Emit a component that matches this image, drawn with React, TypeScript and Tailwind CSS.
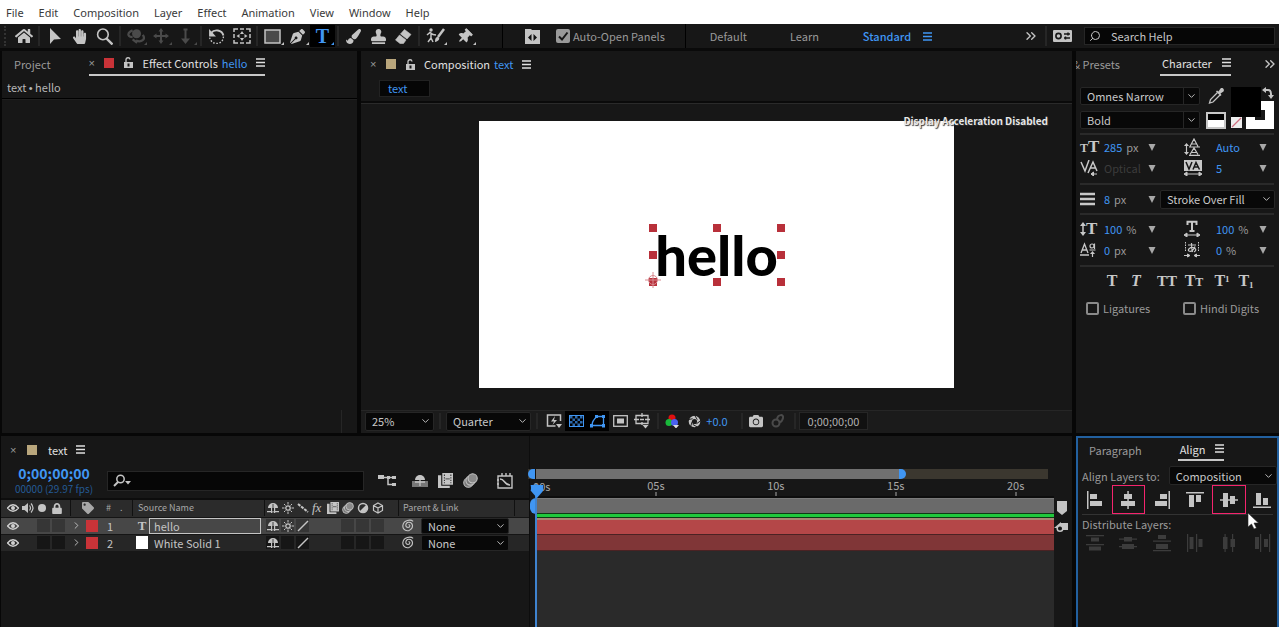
import { useState } from "react";
import type { ReactNode } from "react";
import clsx from "clsx";
import { ChevronDown, ChevronRight, ChevronsRight, Search } from "lucide-react";
import { FaCamera, FaHandPaper, FaHome, FaLock, FaPaintBrush, FaPenNib, FaStamp, FaTag, FaThumbtack } from "react-icons/fa";

const MENUS = ["File", "Edit", "Composition", "Layer", "Effect", "Animation", "View", "Window", "Help"];

const DURATION = 21.6;
const TICKS = [5, 10, 15, 20];

const SERIF = "font-['Liberation_Serif',serif] font-bold";

type IconProps = { className?: string; children: ReactNode; box?: string };

function Icon({ className, children, box = "0 0 16 16" }: IconProps) {
  return (
    <svg
      viewBox={box}
      fill="none"
      stroke="currentColor"
      strokeWidth="1.5"
      className={clsx("shrink-0", className || "w-4 h-4")}
      aria-hidden="true"
    >
      {children}
    </svg>
  );
}

function MenuIcon({ className }: { className?: string }) {
  return (
    <button aria-label="Panel menu" className={clsx("w-[9px] shrink-0", className)}>
      <Icon box="0 0 9 9" className="w-[9px] h-[9px]">
        <path d="M0 1h9M0 4.500h9M0 8h9" strokeWidth="1.300" />
      </Icon>
    </button>
  );
}

function CloseTab({ className }: { className: string }) {
  return (
    <button
      aria-label="Close tab"
      className={clsx("text-left text-[11px] text-[#9a9a9a] font-['Liberation_Sans',sans-serif]", className)}
    >
      ×
    </button>
  );
}

type ToolProps = {
  label: string;
  children: ReactNode;
  more?: boolean;
  active?: boolean;
  dim?: boolean;
  small?: boolean;
  className?: string;
};

function Tool({ label, children, more, active, dim, small, className }: ToolProps) {
  return (
    <button
      aria-label={label}
      className={clsx(
        "relative shrink-0 flex items-center justify-center",
        small ? "w-[22px] h-5" : "w-[25px] h-[22px]",
        active ? "bg-black text-[#4096f3]" : dim ? "text-[#4a4a4a]" : "text-[#c4c4c4]",
        className
      )}
    >
      {children}
      {more && (
        <Icon box="0 0 4 4" className="absolute right-px bottom-[2px] w-[3px] h-[3px]">
          <path d="M4 0v4H0z" fill="currentColor" stroke="none" />
        </Icon>
      )}
    </button>
  );
}

function Sep({ className }: { className?: string }) {
  return (
    <div className={clsx("w-[6px] shrink-0 flex justify-center", className || "h-5")}>
      <div className="w-[2px] bg-[#262626]" />
    </div>
  );
}

type SelectProps = { label: string; options: string[]; className?: string; split?: boolean };

function Select({ label, options, className, split }: SelectProps) {
  return (
    <div className={clsx("relative text-[#c8c8c8]", className)}>
      <select
        aria-label={label}
        className="appearance-none w-full h-full block bg-[#080808] border border-[#262626] rounded-xs pl-[6px] pr-4 leading-[14px]"
      >
        {options.map((o) => (
          <option key={o}>{o}</option>
        ))}
      </select>
      {split && <div className="absolute right-4 top-0 h-full w-px bg-[#262626]" />}
      <ChevronDown className="absolute right-[3px] top-1/2 -translate-y-1/2 w-[11px] h-[11px] pointer-events-none" />
    </div>
  );
}

/* ---------- toolbar ---------- */

function Toolbar() {
  const [autoOpen, setAutoOpen] = useState(true);
  return (
    <div className="h-[27px] shrink-0 flex items-center bg-[#171717] border-b-[3px] border-[#0a0a0a] text-[#9a9a9a] pl-1 pr-1">
      <div className="w-[7px] h-5 shrink-0 border-l-2 border-dotted border-[#333]" />
      <Tool label="Home"><FaHome className="w-[18px] h-[18px]" /></Tool>
      <Sep />
      <Tool label="Selection">
        <Icon>
          <path d="M3 0v16l4-4.500 7-.5z" fill="currentColor" stroke="none" />
        </Icon>
      </Tool>
      <Tool label="Hand"><FaHandPaper className="w-[15px] h-[15px]" /></Tool>
      <Tool label="Zoom">
        <Icon className="w-[17px] h-[17px]">
          <circle cx="6.500" cy="6" r="5" />
          <path d="M10 10l5.500 5.500" strokeWidth="2.200" />
        </Icon>
      </Tool>
      <Sep />
      <Tool label="Orbit camera" dim more>
        <Icon className="w-[18px] h-[18px]">
          <path d="M5 9C1 9 0 6 3 4l2-1M8 12c5 2 9-1 6-5M5 11l4 3" strokeWidth="2" />
          <circle cx="8.500" cy="6" r="4" fill="currentColor" stroke="none" />
        </Icon>
      </Tool>
      <Tool label="Pan camera" dim more>
        <Icon>
          <path d="M8 2v12M2 8h12" strokeWidth="2" />
          <path d="M8 0l2.500 3.500h-5zM8 16l2.500-3.500h-5zM0 8l3.500-2.500v5zM16 8l-3.500-2.500v5z" fill="currentColor" stroke="none" />
        </Icon>
      </Tool>
      <Tool label="Dolly camera" dim more>
        <Icon>
          <path d="M7.500 1v12M5.500 1.500h4" strokeWidth="2" />
          <path d="M7.500 16l4.500-5.500h-9z" fill="currentColor" stroke="none" />
        </Icon>
      </Tool>
      <Sep />
      <Tool label="Rotation">
        <Icon className="w-[17px] h-[17px]">
          <path d="M3 4.500C6 1 13 1.500 14.500 7" strokeWidth="1.800" />
          <path d="M14.500 8c0 8-11 9-13 1" strokeDasharray="1.500 1.500" strokeWidth="1.300" />
          <path d="M1 1v7h6.500z" fill="currentColor" stroke="none" />
        </Icon>
      </Tool>
      <Tool label="Pan behind">
        <Icon className="w-[18px] h-[16px]" box="0 0 18 16">
          <path d="M1 4V1h4M7 1h4M13 1h4v3M17 6v4M17 12v3h-4M11 15H7M5 15H1v-3M1 10V6" />
          <path d="M9 3l2 3H7zM9 13l2-3H7zM3.500 8l3-2v4zM14.500 8l-3-2v4z" fill="currentColor" stroke="none" />
        </Icon>
      </Tool>
      <Sep />
      <Tool label="Rectangle" more>
        <Icon className="w-[17px] h-[15px]" box="0 0 17 15">
          <rect x="1" y="1" width="15" height="13" fill="#4a4a4a" />
        </Icon>
      </Tool>
      <Tool label="Pen" more><FaPenNib className="w-[15px] h-[15px]" /></Tool>
      <Tool label="Type" active more>
        <span className={clsx(SERIF, "text-[20px] leading-5")}>T</span>
      </Tool>
      <Sep />
      <Tool label="Brush"><FaPaintBrush className="w-[15px] h-[15px]" /></Tool>
      <Tool label="Clone stamp"><FaStamp className="w-[15px] h-[15px]" /></Tool>
      <Tool label="Eraser">
        <Icon className="w-[17px] h-[17px]" box="0 0 17 17">
          <path d="M9.500 1.500l6.500 5-4 4.500-6.500-5zM4.500 7l6.500 5-2.500 3.500H5L.5 12z" fill="currentColor" stroke="currentColor" strokeWidth=".6" strokeLinejoin="round" />
        </Icon>
      </Tool>
      <Sep />
      <Tool label="Roto brush" more className="ml-px">
        <Icon className="w-[19px] h-[16px]" box="0 0 19 16">
          <circle cx="5" cy="2" r="1.700" fill="currentColor" stroke="none" />
          <path d="M1 7l3-2.500 3 2 3 .5M5 6v4l-3 4M5 10l2 4" />
          <path d="M18 1l-6 8" strokeWidth="2.500" />
          <path d="M9 14c0-4 1-5 3-5s2 4-3 5z" fill="currentColor" stroke="none" />
        </Icon>
      </Tool>
      <Tool label="Puppet pin" more className="ml-1"><FaThumbtack className="w-[15px] h-[15px] rotate-45" /></Tool>
      <div className="w-px h-6 ml-[25px] bg-black" />
      <button aria-label="Snapping" className="ml-[22px] text-[#c4c4c4]">
        <Icon className="w-[15px] h-[15px]" box="0 0 15 15">
          <path d="M0 0h6l1 1h8v14H0z" fill="currentColor" stroke="none" />
          <path d="M6.500 5L3 8.500 6.500 12zM8.500 5L12 8.500 8.500 12z" fill="#111" stroke="none" />
        </Icon>
      </button>
      <label className="ml-4 flex items-center gap-[3px]">
        <span className="relative w-[14px] h-[14px] block">
          <input
            type="checkbox"
            checked={autoOpen}
            onChange={(e) => setAutoOpen(e.target.checked)}
            className="appearance-none block w-[14px] h-[14px] rounded-xs bg-[#9a9a9a]"
          />
          {autoOpen && (
            <Icon box="0 0 14 14" className="absolute inset-0 w-[14px] h-[14px] text-[#171717] pointer-events-none">
              <path d="M3 7.500l3 3 5.500-7" strokeWidth="2" />
            </Icon>
          )}
        </span>
        Auto-Open Panels
      </label>
      <div className="w-px h-6 ml-5 bg-black" />
      <button className="ml-6">Default</button>
      <button className="ml-[43px]">Learn</button>
      <button className="ml-11 text-[#4096f3] font-medium">Standard</button>
      <MenuIcon className="ml-3 text-[#4096f3]" />
      <ChevronsRight className="ml-auto w-4 h-4 text-[#c4c4c4]" />
      <Sep className="h-5 ml-1" />
      <button aria-label="Workspace settings" className="ml-1 text-[#c4c4c4]">
        <Icon box="0 0 19 12" className="w-[19px] h-3">
          <rect width="19" height="12" rx="1" fill="currentColor" stroke="none" />
          <circle cx="5.500" cy="6" r="2.600" stroke="#171717" strokeWidth="1.600" />
          <path d="M11 4h6M11 8h6" stroke="#171717" />
          <path d="M15 2.500v3M12.500 6.500v3" stroke="#171717" />
        </Icon>
      </button>
      <div className="ml-3 w-[191px] h-[18px] flex items-center bg-[#060606] border border-[#262626] pl-1 gap-[10px]">
        <Search className="w-3 h-3 -scale-x-100 text-[#c4c4c4]" />
        <input
          aria-label="Search Help"
          placeholder="Search Help"
          className="flex-1 min-w-0 bg-transparent outline-none placeholder:text-[#c4c4c4]"
        />
      </div>
    </div>
  );
}

/* ---------- upper panels ---------- */

function Unlock() {
  return (
    <Icon box="0 0 9 11" className="w-[9px] h-[11px] text-[#c4c4c4]">
      <path d="M2 5V3a2 2 0 0 1 4-.5" strokeWidth="1.300" />
      <path d="M0 5h9v6H0zM3.500 6.500v3h2v-3z" fill="currentColor" fillRule="evenodd" stroke="none" />
    </Icon>
  );
}

function EffectControls() {
  return (
    <section className="w-[355px] shrink-0 flex flex-col bg-[#171717]">
      <div className="h-[25px] flex items-stretch pl-3 text-[#9a9a9a]">
        <button>Project</button>
        <div className="ml-[38px] flex items-center border-b-2 border-[#c8c8c8] text-[#e0e0e0]">
          <CloseTab className="w-[15px]" />
          <span className="w-[10px] h-[10px] bg-[#c93338]" />
          <span className="mx-[10px]"><Unlock /></span>
          Effect Controls
          <span className="ml-1 text-[#4096f3]">hello</span>
          <MenuIcon className="ml-[9px]" />
        </div>
      </div>
      <p className="h-[23px] leading-[23px] pl-[5px] border-b border-black text-[#b8b8b8]">
        text <span className="font-['Liberation_Sans',sans-serif]">•</span> hello
      </p>
      <div className="flex-1 border-t border-[#1f1f1f]" />
      <div className="h-[23px] mr-[15px] border-r border-[#262626]" />
    </section>
  );
}

const HANDLES = [
  "left-0 top-0",
  "left-1/2 top-0",
  "left-full top-0",
  "left-0 top-1/2",
  "left-full top-1/2",
  "left-0 top-full",
  "left-1/2 top-full",
  "left-full top-full",
];

function Viewer() {
  return (
    <div className="relative flex-1 flex items-start justify-center pt-[17px] border-t border-[#2a2a2a]">
      <div className="w-[68%] max-w-[475px] aspect-[475/267] bg-white flex items-center justify-center">
        <div className="relative w-32 h-[54px] flex items-center justify-center">
          <span className="font-['Lato',sans-serif] font-black text-[56px] leading-none text-black">hello</span>
          {HANDLES.map((pos) => (
            <span key={pos} className={clsx("absolute w-2 h-2 -ml-1 -mt-1 bg-[#b8303a]", pos)} />
          ))}
          <Icon box="0 0 16 16" className="absolute -left-2 top-[44px] w-4 h-4 text-[#d88a90]">
            <circle cx="8" cy="8" r="4.500" strokeWidth="1" />
            <path d="M8 0v16M0 8h16" strokeWidth="1" />
          </Icon>
        </div>
      </div>
      <p className="absolute right-6 top-[9px] leading-4 text-[10px] font-bold text-[#e8e8e8] [text-shadow:1px_1px_1px_#333]">
        Display Acceleration Disabled
      </p>
    </div>
  );
}

function ViewerFooter() {
  return (
    <div className="h-[23px] flex items-center bg-[#1b1b1b] border-t border-[#262626] pl-1 pb-[2px] text-[#c4c4c4]">
      <Select label="Magnification" options={["25%", "50%", "100%"]} className="w-[69px] h-[19px]" />
      <Sep className="mx-[3px] h-4" />
      <Select label="Resolution" options={["Quarter", "Half", "Full"]} className="w-[85px] h-[19px]" />
      <Sep className="mx-[3px] h-4" />
      <div className="flex items-center">
        <Tool label="Fast previews" small>
          <Icon>
            <path d="M14.500 8V2h-13v11h8" />
            <path d="M9 3L5 8.500h3L6.500 12 11 7H8z" fill="currentColor" stroke="none" />
            <path d="M10 11h6l-3 4z" fill="currentColor" stroke="none" />
          </Icon>
        </Tool>
        <Tool label="Transparency grid" small active>
          <Icon box="0 0 15 12" className="w-[15px] h-3">
            <rect x=".5" y=".5" width="14" height="11" strokeWidth="1" />
            <path
              d="M1 1h2.500v2.500H1zM6 1h2.500v2.500H6zM11 1h2.500v2.500H11zM3.500 3.500H6V6H3.500zM8.500 3.500H11V6H8.500zM1 6h2.500v2.500H1zM6 6h2.500v2.500H6zM11 6h2.500v2.500H11zM3.500 8.500H6V11H3.500zM8.500 8.500H11V11H8.500z"
              fill="currentColor"
              opacity=".7"
              stroke="none"
            />
          </Icon>
        </Tool>
        <Tool label="Mask visibility" small active>
          <Icon>
            <path d="M2 12.500C2 8 4 6 7 3.500l6.500 0V12.500z" strokeWidth="1.300" />
            <path d="M0 11h3v3.500H0zM5 2h3v3H5zM12 2h3v3h-3zM12 11h3v3.500h-3z" fill="currentColor" stroke="none" />
          </Icon>
        </Tool>
        <Tool label="Region of interest" small>
          <Icon box="0 0 15 12" className="w-[15px] h-3">
            <rect x=".7" y=".7" width="13.600" height="10.600" strokeWidth="1.300" />
            <rect x="4" y="3.500" width="7" height="5" fill="currentColor" stroke="none" />
          </Icon>
        </Tool>
        <Tool label="Grid and guides" small>
          <Icon>
            <path d="M2 2.500h12v8H2zM0 6.500h5M11 6.500h5M8 0v4M8 9v3M6 6.500h4" strokeWidth="1.300" />
            <path d="M8.500 12h6l-3 3.500z" fill="currentColor" stroke="none" />
          </Icon>
        </Tool>
      </div>
      <Sep className="ml-[2px] h-4" />
      <Tool label="Channels" small>
        <svg viewBox="0 0 14 14" className="w-[14px] h-[14px]">
          <circle cx="7" cy="4" r="3.500" fill="#e01010" />
          <circle cx="4" cy="8.500" r="3.500" fill="#19b83a" />
          <circle cx="9.500" cy="8.500" r="3.500" fill="#4a62f0" />
          <path d="M8 11h6l-3 3.500z" fill="#ddd" />
        </svg>
      </Tool>
      <Tool label="Reset exposure" small>
        <Icon box="0 0 14 14" className="w-[13px] h-[13px]">
          <circle cx="7" cy="7" r="4.500" strokeWidth="3.500" />
          <path d="M7 0l3 5M14 6l-5 3.500M10 13l-5-3M3 12l1.500-5M0 5l5-1" stroke="#171717" strokeWidth="1" />
        </Icon>
      </Tool>
      <button className="w-6 whitespace-nowrap text-[#4096f3]">+0.0</button>
      <Sep className="ml-[10px] h-4" />
      <Tool label="Snapshot" small><FaCamera className="w-[14px] h-[14px]" /></Tool>
      <Tool label="Show snapshot" dim small>
        <Icon>
          <circle cx="6" cy="10" r="3.500" strokeWidth="2" />
          <path d="M7 6c1-5 7-5 6-1s-3 4-3 4" strokeWidth="2" />
        </Icon>
      </Tool>
      <Sep className="ml-[3px] h-4" />
      <button className="ml-px w-[69px] h-[18px] border border-[#262626] bg-[#111] leading-4 text-[#b0b0b0]">
        0;00;00;00
      </button>
    </div>
  );
}

function Composition() {
  return (
    <section className="flex-1 min-w-0 flex flex-col bg-[#171717]">
      <div className="h-[26px] flex items-center pl-[9px] text-[#e0e0e0]">
        <CloseTab className="w-4" />
        <span className="w-[10px] h-[10px] bg-[#b9a67c]" />
        <span className="ml-[10px] mr-[9px]"><Unlock /></span>
        Composition
        <span className="ml-1 text-[#4096f3]">text</span>
        <MenuIcon className="ml-[9px]" />
      </div>
      <div className="h-[26px] pt-[3px] pl-[18px] border-b-2 border-[#0a0a0a]">
        <button className="block w-[51px] h-[17px] bg-[#060606] border border-[#222] pl-2 text-left leading-[15px] text-[#4096f3]">
          text
        </button>
      </div>
      <Viewer />
      <ViewerFooter />
    </section>
  );
}

/* ---------- character panel ---------- */

type MetricProps = {
  label: string;
  icon: ReactNode;
  value: string;
  unit?: string;
  muted?: boolean;
  wide?: boolean;
};

function Metric({ label, icon, value, unit, muted, wide }: MetricProps) {
  return (
    <div className="flex items-center h-[21px]">
      <span className={clsx("flex justify-start shrink-0 text-[#c8c8c8]", wide ? "w-8" : "w-6")}>{icon}</span>
      <button aria-label={label} className={muted ? "text-[#3c3c3c]" : "text-[#4096f3]"}>
        {value}
      </button>
      {unit && <span className="ml-1 text-[#9a9a9a]">{unit}</span>}
      <Icon box="0 0 8 8" className="ml-auto w-2 h-2 text-[#a8a8a8]">
        <path d="M.5 1h7L4 8z" fill="currentColor" stroke="none" />
      </Icon>
    </div>
  );
}

function Rule() {
  return <div className="h-[2px] ml-1 mr-[5px] bg-[#2a2a2a]" />;
}

function Character() {
  return (
    <section className="flex-1 min-w-0 flex flex-col bg-[#171717]">
      <div className="h-[25px] flex items-stretch pr-px text-[#9a9a9a]">
        <button className="w-11 overflow-hidden flex items-center justify-end whitespace-nowrap">Effects &amp; Presets</button>
        <div className="ml-10 flex items-center border-b-2 border-[#c8c8c8] text-[#e0e0e0]">
          <span className="px-[2px]">Character</span>
          <MenuIcon className="ml-2" />
        </div>
        <ChevronsRight className="ml-auto self-center w-4 h-4 text-[#c4c4c4]" />
      </div>
      <div className="flex pl-1 pt-[11px] pb-1">
        <div className="flex flex-col gap-[6px]">
          <Select label="Font family" options={["Omnes Narrow"]} className="w-[120px] h-[18px]" split />
          <Select label="Font style" options={["Bold", "Regular"]} className="w-[120px] h-[18px]" split />
        </div>
        <div className="ml-[6px] flex flex-col items-center justify-between w-5">
          <button aria-label="Eyedropper" className="text-[#c4c4c4]">
            <Icon box="0 0 17 17" className="w-[17px] h-[18px]">
              <path d="M9.500 5L2.500 12l-1 3.500L5 14.500l7-7" strokeWidth="1.300" />
              <path d="M8 4l1-1 1.500 1 2-3c2-1.500 4.500 1 3 3l-3 2 1 1.500-1 1z" fill="currentColor" stroke="none" />
            </Icon>
          </button>
          <button aria-label="Default colours" className="w-5 h-[17px] border-2 border-[#c8c8c8] bg-black flex items-end">
            <span className="w-full h-[7px] bg-white" />
          </button>
        </div>
        <div className="relative ml-[5px] w-[43px] h-[42px]">
          <button aria-label="Stroke colour" className="absolute right-0 bottom-0 w-7 h-7 border-[9px] border-white bg-[#171717]" />
          <button aria-label="Fill colour" className="absolute left-0 top-0 w-[30px] h-[30px] bg-black" />
          <button aria-label="No colour" className="absolute left-0 bottom-px w-[11px] h-[11px] bg-[#eee]">
            <Icon box="0 0 11 11" className="w-[11px] h-[11px] text-[#d07080]">
              <path d="M1 10L10 1" strokeWidth="1.200" />
            </Icon>
          </button>
          <Icon box="0 0 12 12" className="absolute right-0 top-0 w-3 h-3 text-[#c4c4c4]">
            <path d="M3 3h3q3 0 3 4v1" strokeWidth="2" />
            <path d="M0 3l4-3v6zM9 12L6 8h6z" fill="currentColor" stroke="none" />
          </Icon>
        </div>
      </div>
      <Rule />
      <div className="grid grid-cols-[76px_83px] gap-x-7 pl-1 pt-px pb-[5px]">
        <Metric
          label="Font size"
          value="285"
          unit="px"
          icon={
            <span className={clsx(SERIF, "leading-none text-[12px]")}>
              T<span className="text-[17px]">T</span>
            </span>
          }
        />
        <Metric
          wide
          label="Leading"
          value="Auto"
          icon={
            <Icon box="0 0 16 18" className="w-4 h-[18px]">
              <path d="M2.500 7v8M6 8.500L10 1l4 7.500M7.500 6h5M5 9h11M6 16.500l4-6.500 4 6.500M7.500 14.500h5M5 17.300h11" strokeWidth="1.200" />
              <path d="M0 8l2.500-3L5 8zM0 14l2.500 3L5 14z" fill="currentColor" stroke="none" />
            </Icon>
          }
        />
        <Metric
          label="Kerning"
          value="Optical"
          muted
          icon={
            <Icon box="0 0 18 16" className="w-[18px] h-4">
              <path d="M1 2l4 9 4-11M8 13l5-11 4 9M10.500 8h5" />
              <path d="M11 14h6M11 14l2.500-2v4z" fill="currentColor" strokeWidth="1" />
            </Icon>
          }
        />
        <Metric
          wide
          label="Tracking"
          value="5"
          icon={
            <Icon box="0 0 18 16" className="w-[18px] h-4">
              <path d="M0 0h18v11H0z" fill="currentColor" stroke="none" />
              <path d="M2 2l3 7 3-7M9 9.500l3-7 3.500 7M10.500 7h4" stroke="#171717" />
              <path d="M2 14h14M0 14l3-2v4zM18 14l-3-2v4z" fill="currentColor" strokeWidth="1" />
            </Icon>
          }
        />
      </div>
      <Rule />
      <div className="flex items-center pl-1 pr-1 h-7 gap-1">
        <div className="w-[76px]">
          <Metric
            label="Stroke width"
            value="8"
            unit="px"
            icon={
              <Icon className="w-[15px] h-[14px]" box="0 0 15 14">
                <path d="M0 2h15M0 7h15M0 12h15" strokeWidth="2.500" />
              </Icon>
            }
          />
        </div>
        <Select label="Stroke order" options={["Stroke Over Fill", "Fill Over Stroke"]} className="flex-1 h-[19px]" />
      </div>
      <Rule />
      <div className="grid grid-cols-[76px_83px] gap-x-7 pl-1 pt-[3px] pb-[5px]">
        <Metric
          label="Vertical scale"
          value="100"
          unit="%"
          icon={
            <span className={clsx(SERIF, "flex items-center text-[17px] leading-none")}>
              <Icon box="0 0 6 16" className="w-[6px] h-4">
                <path d="M3 3v10" />
                <path d="M0 5l3-4 3 4zM0 11l3 4 3-4z" fill="currentColor" stroke="none" />
              </Icon>
              T
            </span>
          }
        />
        <Metric
          wide
          label="Horizontal scale"
          value="100"
          unit="%"
          icon={
            <Icon box="0 0 16 17" className="w-4 h-[17px]">
              <path d="M3.500 5V1.800h9V5M8 2v9M5.500 11h5" strokeWidth="2" />
              <path d="M2 15h12M0 15l3-2v4zM16 15l-3-2v4z" fill="currentColor" strokeWidth="1" />
            </Icon>
          }
        />
        <Metric
          label="Baseline shift"
          value="0"
          unit="px"
          icon={
            <Icon box="0 0 16 15" className="w-4 h-[15px]">
              <path d="M1 11l3.500-9L8 11M2.500 8h4.500M0 13h9" strokeWidth="1.300" />
              <circle cx="12" cy="4" r="2" strokeWidth="1.200" />
              <path d="M14.500 1.500v5.500M9.500 8h6M12.500 11v4" strokeWidth="1.200" />
              <path d="M10 12l2.500-3L15 12z" fill="currentColor" stroke="none" />
            </Icon>
          }
        />
        <Metric
          wide
          label="Tsume"
          value="0"
          unit="%"
          icon={
            <Icon box="0 0 16 16" className="w-4 h-4">
              <path d="M1.500 0v10M14.500 0v10" strokeDasharray="1.500 1" strokeWidth="1" />
              <path d="M4 3h8M7.500 1c0 4 0 6 1 9M11 4.500C10 8 7 10 5 9s1-4 4-3.500 4 3 1 4.500" strokeWidth="1.200" />
              <path d="M0 13.500h5M16 13.500h-5M6 13.500L3.500 12v3zM10 13.500l2.500-1.500v3z" fill="currentColor" strokeWidth="1" />
            </Icon>
          }
        />
      </div>
      <Rule />
      <div className={clsx("h-7 flex items-center pl-6 text-[#c8c8c8] text-[16px] leading-none", SERIF)}>
        <button aria-label="Faux bold" className="w-6">T</button>
        <button aria-label="Faux italic" className="w-6 italic">T</button>
        <button aria-label="All caps" className="w-[30px] ml-1 text-[15px]">TT</button>
        <button aria-label="Small caps" className="w-6">T<span className="text-[12px]">T</span></button>
        <button aria-label="Superscript" className="w-6 ml-1">T<sup className="text-[9px]">1</sup></button>
        <button aria-label="Subscript" className="w-6">T<sub className="text-[9px]">1</sub></button>
      </div>
      <div className="h-[26px] flex items-center pl-[10px] text-[#9a9a9a]">
        <label className="w-[97px] flex items-center gap-1">
          <input type="checkbox" className="appearance-none w-[13px] h-[13px] border-2 border-[#8a8a8a] rounded-xs" />
          Ligatures
        </label>
        <label className="flex items-center gap-1">
          <input type="checkbox" className="appearance-none w-[13px] h-[13px] border-2 border-[#8a8a8a] rounded-xs" />
          Hindi Digits
        </label>
      </div>
    </section>
  );
}

/* ---------- align panel ---------- */

const ALIGN = [
  { label: "Align left", d: "M1 0h1.500v18H1zM4 3h7v5H4zM4 10h12v5H4z" },
  { label: "Align horizontal centre", d: "M8.300 0h1.500v18H8.300zM5 3h8v5H5zM2 10h14v5H2z", hot: true },
  { label: "Align right", d: "M15.500 0H17v18h-1.500zM7 3h7v5H7zM2 10h12v5H2z" },
  { label: "Align top", d: "M0 1h18v1.500H0zM3 4h5v12H3zM10 4h5v7h-5z" },
  { label: "Align vertical centre", d: "M0 8.300h18v1.500H0zM3 2h5v14H3zM10 5h5v8h-5z", hot: true },
  { label: "Align bottom", d: "M0 15.500h18V17H0zM3 2h5v12H3zM10 7h5v7h-5z" },
];

const DISTRIBUTE = [
  { label: "Distribute top", d: "M0 1h18v1.200H0zM5 3.500h8v4H5zM0 10h18v1.200H0zM3 12.500h12v4H3z" },
  { label: "Distribute vertical centre", d: "M0 4.500h18v1.200H0zM5 3h8v4.500H5zM0 12h18v1.200H0zM3 10h12v5H3z" },
  { label: "Distribute bottom", d: "M5 1h8v4H5zM0 6.500h18v1.200H0zM3 10h12v5H3zM0 16h18v1.200H0z" },
  { label: "Distribute left", d: "M1 0h1.200v18H1zM3.500 3h4v12h-4zM10 0h1.200v18H10zM12.500 5h4v8h-4z" },
  { label: "Distribute horizontal centre", d: "M4.500 0h1.200v18H4.500zM3 3h4.500v12H3zM12 0h1.200v18H12zM10.500 5H15v8h-4.500z" },
  { label: "Distribute right", d: "M7 0h1.200v18H7zM2 3h4v12H2zM16 0h1.200v18H16zM11 5h4v8h-4z" },
];

function Align() {
  return (
    <section className="relative h-[191px] shrink-0 bg-[#171717] border-2 border-[#22609f] border-b-0 text-[#9a9a9a]">
      <div className="h-[23px] flex items-stretch pl-[11px]">
        <button>Paragraph</button>
        <div className="ml-9 flex items-center border-b-2 border-[#c8c8c8] text-[#e0e0e0]">
          <span className="px-[2px]">Align</span>
          <MenuIcon className="ml-2" />
        </div>
      </div>
      <div className="flex items-center pl-1 pt-[5px] gap-[9px]">
        <span className="whitespace-nowrap">Align Layers to:</span>
        <Select label="Align layers to" options={["Composition", "Selection"]} className="flex-1 h-[19px]" />
      </div>
      <div className="grid grid-cols-6 h-[29px] -mr-[2px] text-[#c4c4c4]">
        {ALIGN.map((a) => (
          <button
            key={a.label}
            aria-label={a.label}
            className={clsx("flex items-center justify-center", a.hot && "border border-[#f5246e]")}
          >
            <Icon box="0 0 18 18" className="w-[18px] h-[18px]">
              <path d={a.d} fill="currentColor" stroke="none" />
            </Icon>
          </button>
        ))}
      </div>
      <div className="mx-1 h-px bg-[#333]" />
      <p className="pl-1 h-[18px] leading-[18px]">Distribute Layers:</p>
      <div className="grid grid-cols-6 h-5 -mr-[2px] text-[#3c3c3c]">
        {DISTRIBUTE.map((a) => (
          <button key={a.label} aria-label={a.label} disabled className="flex items-center justify-center">
            <Icon box="0 0 18 18" className="w-[18px] h-[18px]">
              <path d={a.d} fill="currentColor" stroke="none" />
            </Icon>
          </button>
        ))}
      </div>
      <svg viewBox="0 0 12 18" className="absolute right-[18px] top-[74px] w-3 h-[18px]">
        <path d="M1 1v14l3.500-3 2.500 5 2.500-1-2.500-5h4.500z" fill="#fff" stroke="#222" strokeWidth=".6" />
      </svg>
    </section>
  );
}

/* ---------- timeline ---------- */

function Eye() {
  return (
    <Icon box="0 0 12 8" className="w-3 h-2 text-[#d0d0d0]">
      <path d="M.5 4Q6-2.500 11.500 4 6 10.500.5 4z" strokeWidth="1.300" />
      <circle cx="6" cy="4" r="2" fill="currentColor" stroke="none" />
    </Icon>
  );
}

function Shy() {
  return (
    <Icon box="0 0 12 12" className="w-3 h-3">
      <path d="M1 6a5 5 0 0 1 10 0zM0 9h12v1.200H0zM4 6h1.200v5H4zM7 6h1.200v5H7z" fill="currentColor" stroke="none" />
      <path d="M6 2v8" stroke="#222" strokeWidth=".8" />
    </Icon>
  );
}

function Sun() {
  return (
    <Icon box="0 0 12 12" className="w-3 h-3">
      <circle cx="6" cy="6" r="2.200" strokeWidth="1.300" />
      <path d="M6 0v2.500M6 9.500V12M0 6h2.500M9.500 6H12M2 2l1.500 1.500M8.500 8.500L10 10M10 2L8.500 3.500M2 10l1.500-1.500" strokeWidth="1" />
    </Icon>
  );
}

function Frames({ className }: { className?: string }) {
  return (
    <Icon box="0 0 14 14" className={className}>
      <path d="M4 0h10v11H4zM0 2h3v10h8v2H0z" fill="currentColor" stroke="none" />
      <path d="M6 1.500v8M12 1.500v8" strokeDasharray="1.200 1.200" stroke="#333" strokeWidth="1" />
      <path d="M7 5.500h4" stroke="#333" strokeWidth=".8" />
    </Icon>
  );
}

function MotionBlur({ className }: { className?: string }) {
  return (
    <Icon box="0 0 14 14" className={className}>
      <circle cx="5" cy="9" r="4.300" fill="#777" strokeWidth="1" />
      <circle cx="7" cy="7" r="4.300" fill="#777" strokeWidth="1" />
      <circle cx="9" cy="5" r="4.300" fill="#8a8a8a" strokeWidth="1" />
    </Icon>
  );
}

function Well({ children, dark }: { children?: ReactNode; dark?: boolean }) {
  return (
    <span className={clsx("w-[13px] h-[13px] flex items-center justify-center", dark ? "bg-[#161616]" : "bg-[#363636]")}>
      {children}
    </span>
  );
}

const LAYERS = [
  { id: 1, name: "hello", kind: "text" },
  { id: 2, name: "White Solid 1", kind: "solid" },
];

function LayerTable() {
  return (
    <table className="w-full table-fixed border-collapse text-[#c4c4c4]">
      <colgroup>
        <col className="w-[69px]" />
        <col className="w-[62px]" />
        <col className="w-[132px]" />
        <col className="w-[134px]" />
        <col />
      </colgroup>
      <thead className="text-[9px] bg-[#2b2b2b] text-[#a8a8a8] border-t-2 border-[#0d0d0d]">
        <tr className="h-[18px] text-left">
          <th className="font-normal p-0">
            <div className="flex items-center gap-[3px] pl-[6px] text-[#c4c4c4]">
              <Eye />
              <Icon box="0 0 12 12" className="w-3 h-3">
                <path d="M0 4h2.500L6 1v10L2.500 8H0z" fill="currentColor" stroke="none" />
                <path d="M7.500 3.500q2 2.500 0 5M9 1.500q4 4.500 0 9" strokeWidth="1.200" />
              </Icon>
              <span className="w-2 h-2 mx-px rounded-full bg-current" />
              <FaLock className="w-[10px] h-[11px] ml-[2px]" />
            </div>
          </th>
          <th className="font-normal p-0">
            <div className="flex items-center pl-[11px] border-l border-[#111]">
              <FaTag className="w-3 h-3" />
              <span className="ml-3">#</span>
              <span className="ml-[9px]">.</span>
            </div>
          </th>
          <th className="font-normal p-0">
            <div className="pl-[5px] border-l border-[#111] leading-4">Source Name</div>
          </th>
          <th className="font-normal p-0">
            <div className="flex items-center gap-[3px] pl-[2px] border-l border-[#111] text-[#c4c4c4]">
              <Shy />
              <Sun />
              <Icon box="0 0 12 12" className="w-3 h-3"><path d="M1 2l10 8" strokeDasharray="3 1" strokeWidth="2" /></Icon>
              <span className="w-3 text-[13px] leading-4 italic font-['Liberation_Serif',serif]">fx</span>
              <Frames className="w-3 h-3" />
              <MotionBlur className="w-3 h-3" />
              <Icon box="0 0 12 12" className="w-3 h-3">
                <circle cx="6" cy="6" r="4.500" />
                <path d="M9.500 2.500A5 5 0 0 1 2.500 9.500z" fill="currentColor" stroke="none" />
              </Icon>
              <Icon box="0 0 12 12" className="w-3 h-3">
                <path d="M6 1l4.500 2.500v5L6 11 1.500 8.500v-5zM1.500 3.500L6 6l4.500-2.500M6 6v5" strokeWidth="1.200" />
              </Icon>
            </div>
          </th>
          <th className="font-normal p-0">
            <div className="mr-[14px] pl-1 border-x border-[#111] leading-4">Parent &amp; Link</div>
          </th>
        </tr>
      </thead>
      <tbody>
        {LAYERS.map((layer) => {
          const text = layer.kind === "text";
          return (
            <tr key={layer.id} className={clsx("h-[17px] border-t border-[#151515]", text ? "bg-[#474747]" : "bg-[#262626]")}>
              <td className="p-0">
                <div className="flex items-center gap-[2px] pl-[6px]">
                  <Eye />
                  <span className="w-[14px]" />
                  <Well dark={!text} />
                  <Well dark={!text} />
                </div>
              </td>
              <td className="p-0">
                <div className="flex items-center pl-px leading-4">
                  <ChevronRight className="w-[11px] h-[11px]" />
                  <span className="ml-1 w-3 h-3 bg-[#c93338]" />
                  <span className="ml-[9px]">{layer.id}</span>
                </div>
              </td>
              <td className="p-0">
                <div className="flex items-center pl-1">
                  {text ? (
                    <span className={clsx(SERIF, "w-3 text-center text-[13px] leading-4")}>T</span>
                  ) : (
                    <span className="w-3 h-[13px] bg-white" />
                  )}
                  <span
                    className={clsx(
                      "ml-px mr-[3px] flex-1 pl-1 h-4 leading-[14px] border",
                      text ? "border-[#c4c4c4]" : "border-transparent"
                    )}
                  >
                    {layer.name}
                  </span>
                </div>
              </td>
              <td className="p-0">
                <div className="flex items-center gap-[2px] pl-[2px]">
                  <Well dark={!text}><Shy /></Well>
                  <Well dark={!text}>{text && <Sun />}</Well>
                  <Well dark={!text}>
                    <Icon box="0 0 12 12" className="w-3 h-3"><path d="M1 11L11 1" /></Icon>
                  </Well>
                  <span className="w-7" />
                  <Well dark={!text} />
                  <Well dark={!text} />
                  <Well dark={!text} />
                </div>
              </td>
              <td className="p-0">
                <div className="flex items-center pl-1">
                  <Icon box="0 0 14 14" className="w-[13px] h-[13px] mr-[6px]">
                    <path d="M7 6c2 0 2 3-.5 3-3.500 0-3-5 .5-5.500 5-.5 6 6.500 1 8.500M8 12.300C2 14 .5 9 1 6.500 2 1.500 9 0 12 2.500" strokeWidth="1.200" />
                  </Icon>
                  <Select label={`Parent of ${layer.name}`} options={["None"]} className="w-[88px] h-4" />
                </div>
              </td>
            </tr>
          );
        })}
      </tbody>
    </table>
  );
}

function TimeGraph() {
  return (
    <div className="relative flex-1 min-w-0 flex flex-col">
      <div className="flex-1 flex flex-col ml-[6px] mr-[18px]">
        <div className="h-[10px] mt-[33px] mr-[6px] -ml-2 flex bg-[#3b372f]">
          <span className="w-[7px] rounded-l-full bg-[#4096f3]" />
          <span className="w-[70%] bg-[#707070] border-l border-[#111]" />
          <span className="w-[7px] rounded-r-full bg-[#4096f3]" />
        </div>
        <div className="relative h-[19px] border-b-2 border-[#0d0d0d] text-[#a8a8a8]">
          <span className="absolute left-[-6px] top-0 leading-[14px]">:00s</span>
          {TICKS.map((t) => (
            <span
              key={t}
              className="absolute top-0 bottom-0 w-px -translate-x-1/2 flex flex-col items-center justify-between leading-[13px]"
              style={{ left: `${(t / DURATION) * 100}%` }}
            >
              {String(t).padStart(2, "0")}s
              <span className="w-px h-1 shrink-0 bg-[#a8a8a8]" />
            </span>
          ))}
        </div>
        <div className="h-[15px] bg-[#6a6a6a] border-t border-[#7a7a7a]" />
        <div className="h-[5px] bg-[#20c83c] border-y border-[#0d3a14]" />
        <div className="h-4 bg-[#b44748] border-t-2 border-[#a88674]" />
        <div className="h-[17px] bg-[#803637] border-y border-[#4a2223]" />
        <div className="flex-1 bg-[#2a2a2a]" />
      </div>
      <div className="absolute left-0 top-[62px] w-[6px] h-4 rounded-l-full bg-[#4096f3]" />
      <div className="absolute left-[5px] top-12 bottom-0 w-[2px] bg-[#3f83cf]" />
      <Icon box="0 0 14 14" className="absolute left-0 top-12 w-[14px] h-[14px] text-[#4096f3]">
        <path d="M1 1h12v6l-6 7-6-7z" fill="currentColor" stroke="none" />
      </Icon>
      <Icon box="0 0 12 14" className="absolute right-1 top-[65px] w-3 h-[14px] text-[#c4c4c4]">
        <path d="M1 0h10v10l-5 4-5-4z" fill="currentColor" stroke="none" />
      </Icon>
      <Icon box="0 0 14 12" className="absolute right-1 top-[85px] w-[14px] h-3 text-[#c4c4c4]">
        <path d="M7 2h7v7H7zM0 7l7-6v6z" fill="currentColor" stroke="none" />
        <circle cx="6" cy="7.500" r="2.800" fill="#171717" />
      </Icon>
    </div>
  );
}

function Timeline() {
  return (
    <section className="h-[191px] shrink-0 flex bg-[#171717]">
      <div className="w-[529px] shrink-0 border-r border-[#0d0d0d]">
        <div className="h-[27px] flex items-center pl-[9px] text-[#e0e0e0]">
          <CloseTab className="w-[17px]" />
          <span className="w-[10px] h-[10px] bg-[#b9a67c]" />
          <span className="ml-[11px]">text</span>
          <MenuIcon className="ml-[9px]" />
        </div>
        <div className="h-[35px] flex items-center">
          <div className="w-[106px] text-center text-[#4096f3]">
            <button className="block w-full text-[14px] leading-[17px] font-bold">0;00;00;00</button>
            <p className="text-[10px] leading-[14px] text-[#245a95]">00000 (29.97 fps)</p>
          </div>
          <div className="w-[257px] h-5 flex items-center bg-[#060606] border border-[#262626] pl-[5px]">
            <Icon box="0 0 18 13" className="w-[18px] h-[13px] text-[#c4c4c4]">
              <circle cx="7.500" cy="5" r="3.700" />
              <path d="M5 8l-4 4" strokeWidth="2" />
              <path d="M12 7h6l-3 3.500z" fill="currentColor" stroke="none" />
            </Icon>
            <input aria-label="Search layers" className="flex-1 min-w-0 bg-transparent outline-none" />
          </div>
          <div className="flex items-center ml-[14px] text-[#c4c4c4]">
            <button aria-label="Mini-flowchart" className="w-[34px]">
              <Icon box="0 0 18 14" className="w-[18px] h-[14px]">
                <path d="M0 1h6v4H0zM9 2h3v3H9zM14 2h4v3h-4zM14 9h4v3h-4z" fill="currentColor" stroke="none" />
                <path d="M5 3.500h10M10 4v6.500h5" />
              </Icon>
            </button>
            <button aria-label="Hide shy layers" className="w-[26px]">
              <Icon className="w-4 h-4">
                <path d="M3 7a5 5 0 0 1 10 0z" fill="currentColor" stroke="none" />
                <path d="M0 8h16v6H0z" fill="#777" stroke="none" />
                <path d="M8 2v11M3 9h10" strokeWidth="1.300" />
              </Icon>
            </button>
            <button aria-label="Frame blending" className="w-[25px]"><Frames className="w-[15px] h-[15px]" /></button>
            <button aria-label="Motion blur" className="w-[34px]"><MotionBlur className="w-[15px] h-[15px]" /></button>
            <button aria-label="Graph editor">
              <Icon className="w-4 h-4">
                <path d="M1 3h14v12H1zM5 0v3M9 0v3M13 0v3M0 7h2M0 11h2" strokeWidth="1.400" />
                <path d="M3 6c5 0 4 6 10 6" />
              </Icon>
            </button>
          </div>
        </div>
        <LayerTable />
      </div>
      <TimeGraph />
    </section>
  );
}

export default function App() {
  return (
    <div className="min-h-screen flex flex-col overflow-hidden bg-[#070707] font-['Noto_Sans_CJK_SC',sans-serif] text-[11px] leading-4">
      <nav className="h-6 shrink-0 flex items-center gap-[15px] pl-[6px] pt-[2px] bg-white text-[#3a3a3a] font-['Noto_Sans',sans-serif]">
        {MENUS.map((m) => (
          <button key={m}>{m}</button>
        ))}
      </nav>
      <Toolbar />
      <main className="flex-1 flex gap-1 pl-px">
        <div className="flex-1 min-w-0 flex flex-col gap-[3px]">
          <div className="flex-1 flex gap-1 pl-px">
            <EffectControls />
            <Composition />
          </div>
          <Timeline />
        </div>
        <aside className="w-[203px] shrink-0 flex flex-col gap-[3px]">
          <Character />
          <Align />
        </aside>
      </main>
    </div>
  );
}
